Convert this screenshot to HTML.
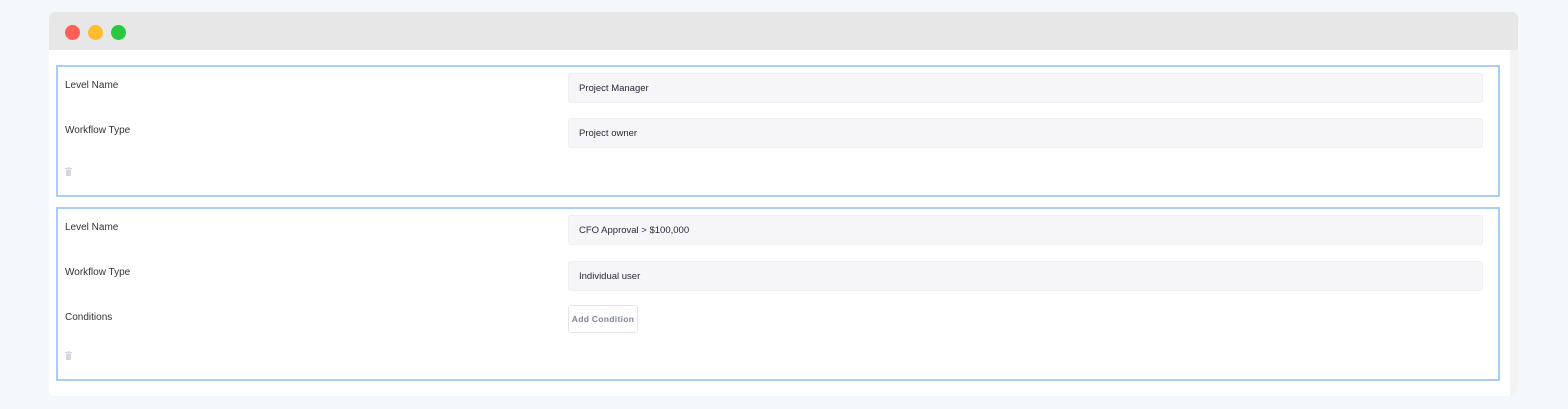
<!DOCTYPE html>
<html><head><style>
body{margin:0;width:1568px;height:409px;background:#f4f7fc;font-family:"Liberation Sans",sans-serif;position:relative;overflow:hidden}
.win{position:absolute;left:49px;top:12px;width:1469px;height:384px;background:#fff;border-radius:6px;overflow:hidden}
.bar{position:absolute;left:0;top:0;width:100%;height:38px;background:#e7e7e7}
.dot{position:absolute;top:13px;width:15px;height:15px;border-radius:50%}
.sb{position:absolute;left:1461px;top:38px;width:8px;bottom:0;background:#f3f3f3}
.box{position:absolute;left:7px;width:1440px;border:2px solid #a9cdf6}
.lbl{position:absolute;left:7px;font-size:10px;color:#333}
.inp{position:absolute;left:510px;height:30px;background:#f6f6f8;border:1px solid #efeff1;border-radius:3px;font-size:9.5px;color:#2a2a3a;line-height:29px;padding-left:10px;box-sizing:border-box;width:915px}
.btn{position:absolute;left:510px;width:70px;height:28px;border:1px solid #e6e6ea;border-radius:3px;font-size:8.5px;font-weight:bold;color:#7d849a;text-align:center;line-height:27px;box-sizing:border-box;letter-spacing:0.3px}
.tr{position:absolute;left:7px;width:7px;height:9px}
</style></head><body>
<div class="win">
<div class="bar"><div class="dot" style="left:16px;background:#fe5f57"></div><div class="dot" style="left:39px;background:#febc2e"></div><div class="dot" style="left:62px;background:#28c840"></div></div>
<div class="sb"></div>
<div class="box" style="top:53px;height:128px">
<div class="lbl" style="top:13px">Level Name</div>
<div class="inp" style="top:6px">Project Manager</div>
<div class="lbl" style="top:58px">Workflow Type</div>
<div class="inp" style="top:51px">Project owner</div>
<svg class="tr" style="top:100px" viewBox="0 0 7 9"><rect x="0" y="1" width="7" height="1" fill="#d3d6e0"/><rect x="2.5" y="0" width="2" height="1" fill="#d3d6e0"/><rect x="1" y="2.5" width="5" height="6.5" fill="#d3d6e0"/></svg>
</div>
<div class="box" style="top:195px;height:170px">
<div class="lbl" style="top:13px">Level Name</div>
<div class="inp" style="top:6px">CFO Approval &gt; $100,000</div>
<div class="lbl" style="top:58px">Workflow Type</div>
<div class="inp" style="top:52px">Individual user</div>
<div class="lbl" style="top:103px">Conditions</div>
<div class="btn" style="top:96px">Add Condition</div>
<svg class="tr" style="top:142px" viewBox="0 0 7 9"><rect x="0" y="1" width="7" height="1" fill="#d3d6e0"/><rect x="2.5" y="0" width="2" height="1" fill="#d3d6e0"/><rect x="1" y="2.5" width="5" height="6.5" fill="#d3d6e0"/></svg>
</div>
</div>
</body></html>
